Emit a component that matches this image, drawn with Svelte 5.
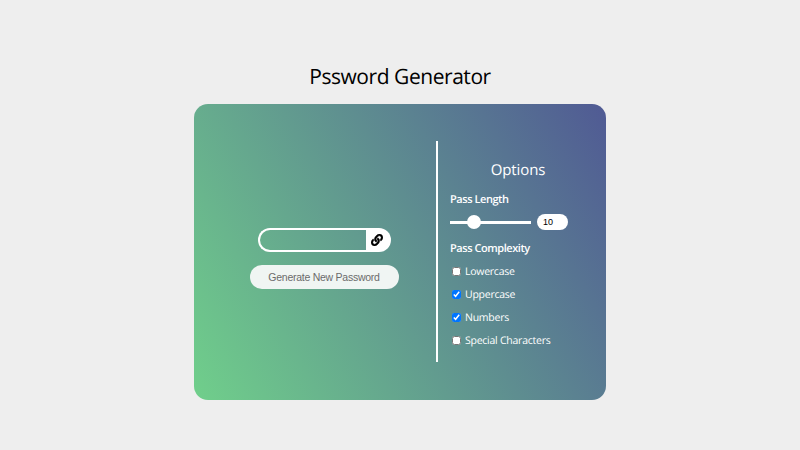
<script>
  let length = $state(10);

  const options = [
    { label: "Lowercase", checked: false },
    { label: "Uppercase", checked: true },
    { label: "Numbers", checked: true },
    { label: "Special Characters", checked: false },
  ];
</script>

<main class="page">
  <h1>Pssword Generator</h1>
  <section class="card">
    <div class="generator">
      <div class="output">
        <input class="password" type="text" readonly aria-label="Password" />
        <button class="copy" aria-label="Copy">
          <svg viewBox="0 0 512 512" width="12" height="12" fill="#000" stroke="#000" stroke-width="16">
            <path d="M326.6 185.4c59.7 59.8 58.9 155.7.4 214.6l-.4.4-67.2 67.2c-59.3 59.3-155.7 59.3-215 0-59.3-59.3-59.3-155.7 0-215l37.1-37.1c9.8-9.8 26.8-3.3 27.3 10.6.6 17.7 3.8 35.5 9.7 52.7 2 5.8.6 12.3-3.8 16.6l-13.1 13.1c-28 28-28.9 73.7-1.2 102 28 28.6 74.1 28.7 102.3.5l67.2-67.2c28.2-28.2 28.1-73.8 0-101.8-3.7-3.7-7.4-6.6-10.3-8.6a16 16 0 0 1-6.9-12.6c-.4-10.6 3.3-21.5 11.7-29.8l21.1-21.1c5.5-5.5 14.2-6.2 20.6-1.7a152.5 152.5 0 0 1 20.5 17.2zM467.5 44.4c-59.3-59.3-155.7-59.3-215 0l-67.2 67.2-.4.4c-58.6 58.9-59.4 154.8.4 214.6a152.5 152.5 0 0 0 20.5 17.2c6.4 4.5 15.1 3.8 20.6-1.7l21.1-21.1c8.4-8.4 12.1-19.2 11.7-29.8a16 16 0 0 0-6.9-12.6c-2.9-2-6.6-4.9-10.3-8.6-28.1-28-28.2-73.6 0-101.8l67.2-67.2c28.2-28.2 74.3-28.1 102.3.5 27.7 28.3 26.8 74-1.2 102l-13.1 13.1c-4.4 4.4-5.8 10.8-3.8 16.6 5.9 17.2 9.1 35 9.7 52.7.5 13.9 17.5 20.4 27.3 10.6l37.1-37.1c59.3-59.3 59.3-155.7 0-215z" />
          </svg>
        </button>
      </div>
      <button class="generate">Generate New Password</button>
    </div>

    <div class="options">
      <h2>Options</h2>
      <span class="heading">Pass Length</span>
      <div class="length">
        <input class="slider" type="range" min="5" max="25" bind:value={length} aria-label="Pass Length" />
        <input class="number" type="text" bind:value={length} aria-label="Length value" />
      </div>
      <span class="heading">Pass Complexity</span>
      {#each options as o (o.label)}
        <label class="check">
          <input type="checkbox" checked={o.checked} />
          <span>{o.label}</span>
        </label>
      {/each}
    </div>
  </section>
</main>

<style>
  :global(body) {
    background: #eeeeee;
    font-family: "Open Sans", sans-serif;
    text-rendering: geometricPrecision;
  }
  .page {
    height: 450px;
    display: flex;
    flex-direction: column;
    align-items: center;
    padding-top: 60px;
    box-sizing: border-box;
  }
  h1 {
    margin: 0 0 10px;
    font-size: 21px;
    line-height: 34px;
    font-weight: 500;
    letter-spacing: -0.45px;
    color: #000;
  }
  .card {
    width: 412px;
    height: 296px;
    box-sizing: border-box;
    padding: 37px 20px 38px 18px;
    border-radius: 14px;
    background: linear-gradient(60deg, #70cf8b 0%, #505a94 100%);
    display: flex;
  }
  .generator {
    flex: 1;
    display: flex;
    flex-direction: column;
    align-items: center;
    justify-content: center;
    gap: 13px;
    margin-top: 13px;
  }
  .output {
    display: flex;
    height: 24px;
  }
  .password {
    width: 108px;
    height: 24px;
    box-sizing: border-box;
    border: 2px solid #fff;
    border-right: 0;
    border-radius: 12px 0 0 12px;
    background: transparent;
    outline: none;
    padding: 0 8px;
  }
  .copy {
    width: 25px;
    height: 24px;
    padding: 0 2px 0 0;
    border: 0;
    border-radius: 0 12px 12px 0;
    background: #fff;
    display: flex;
    align-items: center;
    justify-content: center;
  }
  .generate {
    width: 149px;
    height: 24px;
    padding: 0;
    border: 0;
    border-radius: 12px;
    background: #f0f5f3;
    color: #6b6b6b;
    font-family: "Liberation Sans", Arial, sans-serif;
    font-size: 10.5px;
    letter-spacing: -0.26px;
  }
  .options {
    width: 150px;
    box-sizing: border-box;
    border-left: 2px solid #fff;
    padding-left: 12px;
    color: #fff;
    display: flex;
    flex-direction: column;
  }
  h2 {
    margin: 18px 0 0;
    font-size: 15px;
    line-height: 22px;
    font-weight: 500;
    letter-spacing: -0.1px;
    text-align: center;
    width: 136px;
  }
  .heading {
    margin-top: 11px;
    font-size: 11px;
    line-height: 16px;
    font-weight: 600;
    letter-spacing: -0.45px;
  }
  .length {
    display: flex;
    align-items: center;
    gap: 6px;
    margin-top: 6px;
    height: 16px;
  }
  .slider {
    appearance: none;
    -webkit-appearance: none;
    width: 81px;
    height: 3px;
    margin: 0;
    background: #fff;
    outline: none;
  }
  .slider::-webkit-slider-thumb {
    -webkit-appearance: none;
    width: 14px;
    height: 14px;
    border-radius: 50%;
    background: #fff;
    border: 0;
  }
  .number {
    width: 31px;
    height: 16px;
    box-sizing: border-box;
    border: 0;
    border-radius: 8px;
    background: #fff;
    padding: 0 0 0 6px;
    font-family: "Liberation Sans", Arial, sans-serif;
    font-size: 9px;
    color: #000;
    outline: none;
  }
  .check {
    display: flex;
    align-items: center;
    gap: 4px;
    height: 23px;
    padding-left: 2px;
    font-size: 10.5px;
    letter-spacing: -0.25px;
  }
  .check input {
    width: 9px;
    height: 9px;
    margin: 0;
  }
  .heading + .check {
    margin-top: 3px;
  }
</style>
